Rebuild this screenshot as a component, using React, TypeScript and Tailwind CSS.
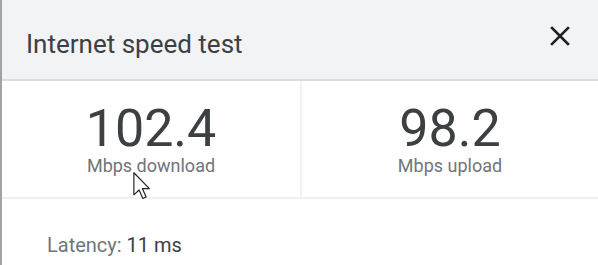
import React from 'react';

type Stat = { value: string; label: string };

const stats: Stat[] = [
  { value: '102.4', label: 'Mbps download' },
  { value: '98.2', label: 'Mbps upload' },
];

function CloseIcon() {
  return (
    <svg width="20" height="20" viewBox="0 0 20 20" fill="none">
      <path d="M2 2L18 18M18 2L2 18" stroke="#202124" strokeWidth="2.6" strokeLinecap="square" />
    </svg>
  );
}

function Cursor() {
  return (
    <svg width="18" height="28" viewBox="0 0 12 19" className="absolute left-[131px] top-[172px]">
      <path
        d="M0.5 0.5 L0.5 15.5 L4 12.2 L6.6 18 L8.8 17 L6.3 11.3 L11 11.3 Z"
        fill="#fff"
        stroke="#222"
        strokeWidth="0.8"
        strokeLinejoin="round"
      />
    </svg>
  );
}

export default function App() {
  return (
    <div className="relative w-[598px] h-[265px] overflow-hidden bg-white border-l-2 border-[#a3a3a3] font-['Roboto',sans-serif]">
      {/* header */}
      <div className="flex items-start justify-between h-[81px] bg-[#f1f3f4] border-b-2 border-[#dadce0] pl-[24px] pr-[28px]">
        <h1 className="pt-[31px] text-[26px] leading-[26px] text-[#3c4043]">Internet speed test</h1>
        <div className="pt-[26px]">
          <CloseIcon />
        </div>
      </div>

      {/* stats */}
      <div className="grid grid-cols-[300px_1fr] border-b-2 border-[#f1f1f1]">
        {stats.map((s, i) => (
          <div
            key={s.label}
            className={
              'flex flex-col items-center pt-[22px] pb-[22px] gap-[2px] ' +
              (i === 0 ? 'border-r-2 border-[#f1f1f1]' : '')
            }
          >
            <span className="text-[52px] leading-[52px] text-[#3c4043]">{s.value}</span>
            <span className="text-[18px] leading-[18px] text-[#70757a]">{s.label}</span>
          </div>
        ))}
      </div>

      {/* latency */}
      <div className="pt-[36px] pl-[45px] text-[20px] leading-[20px]">
        <span className="text-[#70757a]">Latency: </span>
        <span className="text-[#3c4043]">11 ms</span>
      </div>

      <Cursor />
    </div>
  );
}
